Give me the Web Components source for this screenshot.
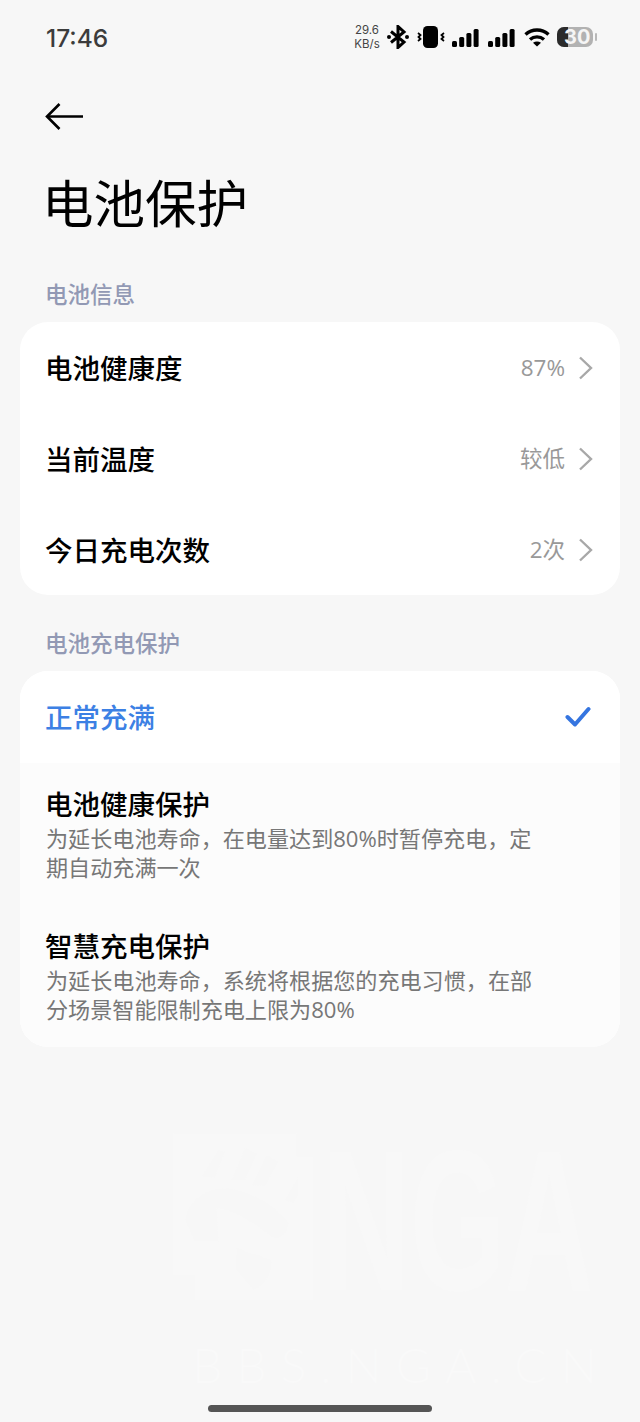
<!DOCTYPE html>
<html lang="zh-CN">
<head>
<meta charset="utf-8">
<title>电池保护</title>
<style>
  html, body { margin: 0; padding: 0; background: #f7f7f7; }
  body { font-family: "Noto Sans CJK SC", "Noto Sans", sans-serif; }
</style>
</head>
<body>
<battery-page>
  <status-bar slot="status"></status-bar>
  <section-label>电池信息</section-label>
  <list-card>
    <value-row label="电池健康度" value="87%"></value-row>
    <value-row label="当前温度" value="较低"></value-row>
    <value-row label="今日充电次数" value="2次"></value-row>
  </list-card>
  <section-label>电池充电保护</section-label>
  <list-card>
    <choice-row label="正常充满" selected></choice-row>
    <choice-row label="电池健康保护">为延长电池寿命，在电量达到80%时暂停充电，定期自动充满一次</choice-row>
    <choice-row label="智慧充电保护">为延长电池寿命，系统将根据您的充电习惯，在部分场景智能限制充电上限为80%</choice-row>
  </list-card>
</battery-page>

<script>
  function shadow(el, html) {
    el.attachShadow({ mode: "open" }).innerHTML = html;
  }

  class BatteryPage extends HTMLElement {
    constructor() {
      super();
      shadow(this, `
        <style>
          :host { display: block; position: relative; width: 640px; height: 1422px; overflow: hidden; background: #f7f7f7; }
          .back { display: block; margin: 28px 0 0 43px; }
          h1 { margin: 33px 0 0 42px; font: 400 51.5px/72px "Noto Sans CJK SC", sans-serif; color: #000; }
          .content { margin-top: 40px; }
          /* watermark, barely lighter than the page */
          .mark { position: absolute; left: 150px; top: 1120px; width: 470px; height: 270px; color: #f8f8f8; pointer-events: none; }
          .mark svg { position: absolute; left: 0; top: 0; }
          .mark .nga { position: absolute; left: 172px; top: 16px; font: 700 200px/170px "Liberation Sans", sans-serif; transform: scaleX(.61); transform-origin: left top; white-space: nowrap; }
          .mark .url { position: absolute; left: 42px; top: 220px; font: 300 48px/50px "Lato", sans-serif; letter-spacing: 14px; white-space: nowrap; color: #f9f9f9; }
          .home { position: absolute; left: 208px; top: 1405px; width: 224px; height: 7px; border-radius: 4px; background: #555; }
        </style>
        <slot name="status"></slot>
        <svg class="back" width="42" height="30" viewBox="0 0 42 30" fill="none" stroke="#000" stroke-width="2.6">
          <path d="M40 14.5H4"/>
          <path d="M16.500 2 4 14.500 16.500 27"/>
        </svg>
        <h1>电池保护</h1>
        <div class="content"><slot></slot></div>
        <div class="mark">
          <svg width="470" height="302" viewBox="0 0 1410 906">
            <path fill="currentColor" d="M70 40H440V110H490V540H135V465H70Z"/>
            <g fill="#f7f7f7">
              <path d="M205 90 155 170 195 172 225 95Z"/>
              <path d="M285 85 245 180 285 180 320 100Z"/>
              <path d="M350 105 305 195 345 198 385 125Z"/>
              <path d="M445 170 405 240 430 250 445 225Z"/>
              <path d="M105 300C120 235 170 205 230 205 310 215 380 260 415 310 410 340 395 355 375 355 320 320 265 270 200 265L205 365H135Z"/>
              <path d="M260 385 365 420C365 465 345 495 310 510L260 450Z"/>
            </g>
          </svg>
          <span class="nga">NGA</span>
          <span class="url">BBS.NGA.CN</span>
        </div>
        <div class="home"></div>
      `);
    }
  }

  class StatusBar extends HTMLElement {
    constructor() {
      super();
      const bars = `<svg width="27" height="20" viewBox="0 0 27 20" fill="#000" style="margin-top:2px">
          <rect x="0" y="13" width="5" height="6" rx="1.500"/><rect x="7.200" y="9" width="5" height="10" rx="1.500"/>
          <rect x="14.400" y="5" width="5" height="14" rx="1.500"/><rect x="21.600" y="1" width="5" height="18" rx="1.500"/>
        </svg>`;
      shadow(this, `
        <style>
          :host { display: flex; align-items: center; height: 74px; padding: 0 0 0 46px; box-sizing: border-box; }
          .time { font: 500 24.5px/30px "Inter", "Roboto", sans-serif; color: #3c3c3c; margin-top: 1px; }
          .icons { margin-left: auto; display: flex; align-items: center; margin-right: 43px; }
          .speed { font: 400 11.5px/14px "Inter", sans-serif; color: #444; text-align: center; width: 26px; margin-right: 7px; }
          .speed span { display: block; white-space: nowrap; }
          svg { display: block; flex: none; }
          .battery { position: relative; width: 40px; height: 20px; margin-left: 7px; }
          .battery b { position: absolute; left: 7px; top: 0; width: 26px; text-align: center; font: 700 20px/20px "Inter", sans-serif; color: #f5f5f5; }
        </style>
        <span class="time">17:46</span>
        <div class="icons">
          <div class="speed"><span>29.6</span><span>KB/s</span></div>
          <svg width="22" height="24" viewBox="0 0 22 24" fill="none" stroke="#000" stroke-width="3" style="margin-right:8px">
            <path d="M4 6.500 17 17 11 22.500V1.500L17 7 4 17.500"/>
            <circle cx="2" cy="12" r="2" fill="#000" stroke="none"/><circle cx="20" cy="12" r="2" fill="#000" stroke="none"/>
          </svg>
          <svg width="28" height="24" viewBox="0 0 28 24" fill="#000" style="margin-right:7px">
            <rect x="6" y="1" width="15" height="22" rx="4.500"/>
            <path d="M1 8 3.500 10 1.500 12 3.500 14 1 16" fill="none" stroke="#000" stroke-width="1.800"/>
            <path d="M27 8 24.500 10 26.500 12 24.500 14 27 16" fill="none" stroke="#000" stroke-width="1.800"/>
          </svg>
          ${bars}
          <span style="width:9px"></span>
          ${bars}
          <svg width="26" height="20" viewBox="0 0 26 20" fill="none" stroke="#000" stroke-width="3.400" style="margin-left:9px">
            <path d="M1.500 7.500C8 1.500 18 1.500 24.500 7.500"/>
            <path d="M6 12.500C10 9 16 9 20 12.500"/>
            <path d="M13 19.500 9 15.800C11.500 14 14.500 14 17 15.800Z" fill="#000" stroke="none"/>
          </svg>
          <div class="battery">
            <svg width="40" height="20" viewBox="0 0 40 20">
              <rect x="0" y="0" width="36" height="20" rx="7" fill="#b2b2b2"/>
              <path d="M7 0H11V20H7A7 7 0 0 1 0 13V7A7 7 0 0 1 7 0Z" fill="#2b2b2b"/>
              <rect x="38" y="6" width="2" height="8" rx="1" fill="#b8b8b8"/>
            </svg>
            <b>30</b>
          </div>
        </div>
      `);
    }
  }

  class SectionLabel extends HTMLElement {
    constructor() {
      super();
      shadow(this, `
        <style>
          :host { display: block; padding: 0 45px; height: 45px; font: 500 22.500px/32px "Noto Sans CJK SC", sans-serif; color: #9299b4; }
        </style>
        <slot></slot>
      `);
    }
  }

  class ListCard extends HTMLElement {
    constructor() {
      super();
      shadow(this, `
        <style>
          :host { display: block; margin: 0 20px 31px; background: #fff; border-radius: 28px; overflow: hidden; }
        </style>
        <slot></slot>
      `);
    }
  }

  class ValueRow extends HTMLElement {
    constructor() {
      super();
      shadow(this, `
        <style>
          :host { display: flex; align-items: center; height: 91px; padding: 0 27px 0 26px; }
          .label { font: 500 27.500px/36px "Noto Sans CJK SC", sans-serif; color: #000; margin: 0 0 2px -1px; }
          .value { margin-left: auto; font: 400 22.500px/30px "Open Sans", "Noto Sans CJK SC", sans-serif; color: #999; }
          svg { margin-left: 13px; flex: none; }
        </style>
        <span class="label"></span>
        <span class="value"></span>
        <svg width="15" height="24" viewBox="0 0 15 24" fill="none" stroke="#a8a8a8" stroke-width="2.400"><path d="M2 1.500 13 12 2 22.500"/></svg>
      `);
    }
    connectedCallback() {
      this.shadowRoot.querySelector(".label").textContent = this.getAttribute("label");
      this.shadowRoot.querySelector(".value").textContent = this.getAttribute("value");
    }
  }

  class ChoiceRow extends HTMLElement {
    constructor() {
      super();
      shadow(this, `
        <style>
          :host { display: flex; align-items: center; padding: 22px 26px 23px; background: #fcfcfc; }
          :host([selected]) { background: #fff; height: 92px; box-sizing: border-box; padding: 0 26px 2px; }
          .text { width: 490px; }
          .label { font: 500 27.500px/36px "Noto Sans CJK SC", sans-serif; color: #000; margin-left: -1px; }
          :host([selected]) .label { color: #3c80e4; }
          .desc { margin-top: 3px; font: 400 22.100px/29px "Open Sans", "Noto Sans CJK SC", sans-serif; color: #777; }
          :host([selected]) .desc { display: none; }
          svg { display: none; margin: 2px 3px 0 auto; flex: none; }
          :host([selected]) svg { display: block; }
        </style>
        <div class="text">
          <div class="label"></div>
          <div class="desc"><slot></slot></div>
        </div>
        <svg width="26" height="22" viewBox="0 0 26 22" fill="none" stroke="#3575e0" stroke-width="4" stroke-linecap="round" stroke-linejoin="round"><path d="M2.500 11 10 18.500 23.500 3"/></svg>
      `);
    }
    connectedCallback() {
      this.shadowRoot.querySelector(".label").textContent = this.getAttribute("label");
    }
  }

  customElements.define("battery-page", BatteryPage);
  customElements.define("status-bar", StatusBar);
  customElements.define("section-label", SectionLabel);
  customElements.define("list-card", ListCard);
  customElements.define("value-row", ValueRow);
  customElements.define("choice-row", ChoiceRow);
</script>
</body>
</html>
